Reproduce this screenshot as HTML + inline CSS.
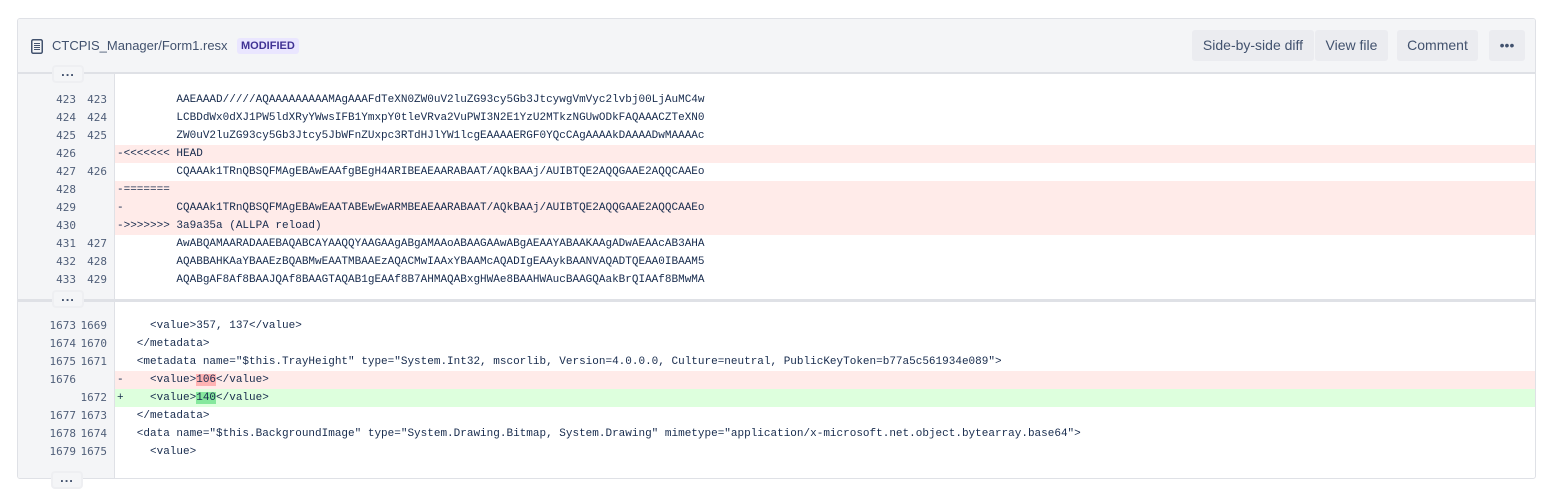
<!DOCTYPE html>
<html><head><meta charset="utf-8"><style>
*{margin:0;padding:0;box-sizing:border-box}
body{width:1555px;height:488px;background:#fff;position:relative;overflow:hidden;font-family:"Liberation Sans",sans-serif}
.card{position:absolute;left:17px;top:18px;width:1519px;height:461px;border:1px solid #dfe1e6;border-radius:3px;background:#fff;overflow:hidden}
.hdr{position:absolute;left:0;top:0;right:0;height:55px;background:#f4f5f7;border-bottom:2px solid #dfe1e6}
.title{position:absolute;left:34px;top:19px;font-size:13px;color:#42526e}
.badge{position:absolute;left:219px;top:19px;background:#eae6ff;color:#403294;font-size:11px;font-weight:bold;padding:2px 4px;border-radius:3px}
.btn{position:absolute;top:11px;height:31px;background:#ebecf0;color:#42526e;font-size:14px;line-height:31px;text-align:center;border-radius:3px}
.gut{position:absolute;left:0;top:55px;width:97px;bottom:0;background:#f4f5f7;border-right:1px solid #dfe1e6}
.row{position:absolute;left:0;right:0;height:18px;font-family:"Liberation Mono",monospace;font-size:11px;line-height:18px;color:#172b4d}
.row .o,.row .n{position:absolute;width:40px;text-align:right;color:#505f79;font-family:"DejaVu Sans Mono",monospace;font-size:11px}
.row .o{left:18px}.row .n{left:49px}
.row pre{position:absolute;left:99px;font:inherit;white-space:pre}
.del{background:#ffebe9}
.add{background:#ddffdd}
.rowbg{position:absolute;left:97px;right:0;height:18px}
.sep{position:absolute;left:0;right:0;height:3px;background:#dfe1e6}
.ell{position:absolute;left:34px;width:32px;height:18px;border:2px solid #eeeff2;background:#f4f5f7;border-radius:4px;font-size:13px;font-weight:bold;text-align:center;line-height:10px;color:#42526e;letter-spacing:1px}
.hd{background:#ffb3b3}.ha{background:#85e89d}
</style></head><body>
<div class="card">
<div class="hdr">
<svg style="position:absolute;left:13px;top:20px" width="12" height="15" viewBox="0 0 12 15"><rect x="0.75" y="0.75" width="10.5" height="13.5" rx="1.5" fill="none" stroke="#42526e" stroke-width="1.5"/><path d="M3 4.5h6M3 6.5h6M3 8.5h6M3 10.5h6" stroke="#42526e" stroke-width="1"/></svg>
<div class="title">CTCPIS_Manager/Form1.resx</div>
<div class="badge">MODIFIED</div>
<div class="btn" style="left:1174px;width:122px">Side-by-side diff</div>
<div class="btn" style="left:1297px;width:73px">View file</div>
<div class="btn" style="left:1379px;width:81px">Comment</div>
<div class="btn" style="left:1471px;width:36px">•••</div>
</div>
<div class="gut"></div>

<div class="row" style="top:72px"><span class="o">423</span><span class="n">423</span><pre>         AAEAAAD/////AQAAAAAAAAAMAgAAAFdTeXN0ZW0uV2luZG93cy5Gb3JtcywgVmVyc2lvbj00LjAuMC4w</pre></div>
<div class="row" style="top:90px"><span class="o">424</span><span class="n">424</span><pre>         LCBDdWx0dXJ1PW5ldXRyYWwsIFB1YmxpY0tleVRva2VuPWI3N2E1YzU2MTkzNGUwODkFAQAAACZTeXN0</pre></div>
<div class="row" style="top:108px"><span class="o">425</span><span class="n">425</span><pre>         ZW0uV2luZG93cy5Gb3Jtcy5JbWFnZUxpc3RTdHJlYW1lcgEAAAAERGF0YQcCAgAAAAkDAAAADwMAAAAc</pre></div>
<div class="rowbg del" style="top:126px"></div>
<div class="row" style="top:126px"><span class="o">426</span><span class="n"></span><pre>-<<<<<<< HEAD</pre></div>
<div class="row" style="top:144px"><span class="o">427</span><span class="n">426</span><pre>         CQAAAk1TRnQBSQFMAgEBAwEAAfgBEgH4ARIBEAEAARABAAT/AQkBAAj/AUIBTQE2AQQGAAE2AQQCAAEo</pre></div>
<div class="rowbg del" style="top:162px;height:54px"></div>
<div class="row" style="top:162px"><span class="o">428</span><span class="n"></span><pre>-=======</pre></div>
<div class="row" style="top:180px"><span class="o">429</span><span class="n"></span><pre>-        CQAAAk1TRnQBSQFMAgEBAwEAATABEwEwARMBEAEAARABAAT/AQkBAAj/AUIBTQE2AQQGAAE2AQQCAAEo</pre></div>
<div class="row" style="top:198px"><span class="o">430</span><span class="n"></span><pre>->>>>>>> 3a9a35a (ALLPA reload)</pre></div>
<div class="row" style="top:216px"><span class="o">431</span><span class="n">427</span><pre>         AwABQAMAARADAAEBAQABCAYAAQQYAAGAAgABgAMAAoABAAGAAwABgAEAAYABAAKAAgADwAEAAcAB3AHA</pre></div>
<div class="row" style="top:234px"><span class="o">432</span><span class="n">428</span><pre>         AQABBAHKAaYBAAEzBQABMwEAATMBAAEzAQACMwIAAxYBAAMcAQADIgEAAykBAANVAQADTQEAA0IBAAM5</pre></div>
<div class="row" style="top:252px"><span class="o">433</span><span class="n">429</span><pre>         AQABgAF8Af8BAAJQAf8BAAGTAQAB1gEAAf8B7AHMAQABxgHWAe8BAAHWAucBAAGQAakBrQIAAf8BMwMA</pre></div>

<div class="sep" style="top:280px"></div>
<div class="ell" style="top:271px">...</div>
<div class="ell" style="top:46px">...</div>

<div class="row" style="top:298px"><span class="o">1673</span><span class="n">1669</span><pre>     &lt;value&gt;357, 137&lt;/value&gt;</pre></div>
<div class="row" style="top:316px"><span class="o">1674</span><span class="n">1670</span><pre>   &lt;/metadata&gt;</pre></div>
<div class="row" style="top:334px"><span class="o">1675</span><span class="n">1671</span><pre>   &lt;metadata name="$this.TrayHeight" type="System.Int32, mscorlib, Version=4.0.0.0, Culture=neutral, PublicKeyToken=b77a5c561934e089"&gt;</pre></div>
<div class="rowbg del" style="top:352px"></div>
<div class="row" style="top:352px"><span class="o">1676</span><span class="n"></span><pre>-    &lt;value&gt;<span class="hd">106</span>&lt;/value&gt;</pre></div>
<div class="rowbg add" style="top:370px"></div>
<div class="row" style="top:370px"><span class="o"></span><span class="n">1672</span><pre>+    &lt;value&gt;<span class="ha">140</span>&lt;/value&gt;</pre></div>
<div class="row" style="top:388px"><span class="o">1677</span><span class="n">1673</span><pre>   &lt;/metadata&gt;</pre></div>
<div class="row" style="top:406px"><span class="o">1678</span><span class="n">1674</span><pre>   &lt;data name="$this.BackgroundImage" type="System.Drawing.Bitmap, System.Drawing" mimetype="application/x-microsoft.net.object.bytearray.base64"&gt;</pre></div>
<div class="row" style="top:424px"><span class="o">1679</span><span class="n">1675</span><pre>     &lt;value&gt;</pre></div>
</div>
<div class="ell" style="top:471px;left:51px;position:absolute">...</div>
</body></html>
